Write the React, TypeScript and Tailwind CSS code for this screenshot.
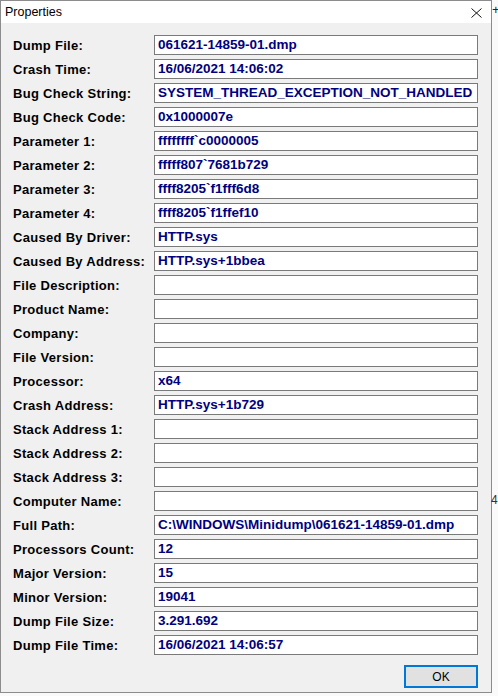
const rows: [string, string][] = [
  ["Dump File:", "061621-14859-01.dmp"],
  ["Crash Time:", "16/06/2021 14:06:02"],
  ["Bug Check String:", "SYSTEM_THREAD_EXCEPTION_NOT_HANDLED"],
  ["Bug Check Code:", "0x1000007e"],
  ["Parameter 1:", "ffffffff`c0000005"],
  ["Parameter 2:", "fffff807`7681b729"],
  ["Parameter 3:", "ffff8205`f1fff6d8"],
  ["Parameter 4:", "ffff8205`f1ffef10"],
  ["Caused By Driver:", "HTTP.sys"],
  ["Caused By Address:", "HTTP.sys+1bbea"],
  ["File Description:", ""],
  ["Product Name:", ""],
  ["Company:", ""],
  ["File Version:", ""],
  ["Processor:", "x64"],
  ["Crash Address:", "HTTP.sys+1b729"],
  ["Stack Address 1:", ""],
  ["Stack Address 2:", ""],
  ["Stack Address 3:", ""],
  ["Computer Name:", ""],
  ["Full Path:", "C:\\WINDOWS\\Minidump\\061621-14859-01.dmp"],
  ["Processors Count:", "12"],
  ["Major Version:", "15"],
  ["Minor Version:", "19041"],
  ["Dump File Size:", "3.291.692"],
  ["Dump File Time:", "16/06/2021 14:06:57"],
];

export default function App() {
  return (
    <div className="relative w-[498px] h-[696px] overflow-hidden bg-[#fafafa] font-['Liberation_Sans',Arial,sans-serif]">
      {/* bits of the window behind, cut off by the dialog */}
      <span className="absolute left-[492px] top-[3px] text-[13px] leading-none text-[#222]">+</span>
      <span className="absolute left-[491px] top-[494px] text-[12px] leading-none text-[#333]">48</span>

      <div className="flex flex-col w-[492px] h-[693px] border border-[#8c8c8c] bg-[#f0f0f0]">
        <div className="flex items-center justify-between h-[22px] bg-white pl-[4px] pr-[9px]">
          <span className="text-[12.5px] text-black">Properties</span>
          <svg width="11" height="10" viewBox="0 0 11 10" className="mt-[1px]">
            <path d="M0.5 0.5 L10.5 9.5 M10.5 0.5 L0.5 9.5" stroke="#111" strokeWidth="1" fill="none" />
          </svg>
        </div>

        <div className="flex flex-col pt-[12px] pl-[12px] pr-[13px]">
          <div className="flex flex-col gap-[4px]">
            {rows.map(([label, value]) => (
              <div key={label} className="flex items-center h-[20px]">
                <div className="w-[141px] text-[13px] font-bold tracking-[0.3px] text-black leading-none">{label}</div>
                <div className="flex items-center w-[324px] h-[20px] border border-[#7a7a7a] bg-white pl-[3px]">
                  <span className="text-[13.5px] font-bold text-[#000080] leading-none whitespace-nowrap">{value}</span>
                </div>
              </div>
            ))}
          </div>
          <div className="flex justify-end mt-[10px]">
            <button className="w-[74px] h-[23px] border-2 border-[#0078d7] bg-[#e1e1e1] text-[12px] text-black">
              OK
            </button>
          </div>
        </div>
      </div>
    </div>
  );
}
